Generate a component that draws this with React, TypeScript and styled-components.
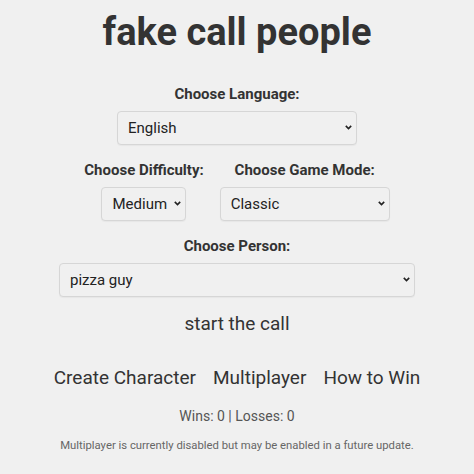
import React, { useState } from "react"
import styled, { createGlobalStyle } from "styled-components"

const GlobalStyle = createGlobalStyle`
  html, body {
    margin: 0;
    padding: 0;
    background: #f0f0f0;
    font-family: Roboto, "Liberation Sans", sans-serif;
    color: #333;
  }
`

const Page = styled.div`
  display: flex;
  flex-direction: column;
  align-items: center;
  min-height: 474px;
  box-sizing: border-box;
`

const Title = styled.h1`
  margin: 10px 0 0;
  font-size: 38px;
  line-height: 44px;
  font-weight: 700;
  color: #333;
`

const Form = styled.div`
  display: flex;
  flex-direction: column;
  align-items: center;
  gap: 16px;
  margin-top: 31px;
`

const FieldRow = styled.div`
  display: flex;
  gap: 16px;
  align-items: flex-start;
`

const Field = styled.div`
  display: flex;
  flex-direction: column;
  align-items: center;
  gap: 8px;
`

const Label = styled.label`
  font-size: 15px;
  line-height: 18px;
  font-weight: 700;
  color: #333;
`

const SelectBox = styled.div<{ $width: number }>`
  position: relative;
  width: ${({ $width }) => $width}px;
  height: 34px;
`

const Select = styled.select`
  appearance: none;
  width: 100%;
  height: 100%;
  padding: 0 14px 0 10px;
  font-family: Roboto, "Liberation Sans", sans-serif;
  font-size: 15px;
  color: #222;
  background: #f0f0f0;
  border: 1px solid #d6d6d6;
  border-radius: 4px;
  box-shadow: 0 1px 1px rgba(0, 0, 0, 0.04);
  cursor: pointer;
`

const Chevron = styled.svg`
  position: absolute;
  right: 5px;
  top: 14px;
  width: 7px;
  height: 5px;
  pointer-events: none;
`

function Dropdown({
  id,
  width,
  value,
  onChange,
  options,
}: {
  id: string
  width: number
  value: string
  onChange: (v: string) => void
  options: [string, string][]
}) {
  return (
    <SelectBox $width={width}>
      <Select id={id} value={value} onChange={e => onChange(e.target.value)}>
        {options.map(([v, label]) => (
          <option key={v} value={v}>
            {label}
          </option>
        ))}
      </Select>
      <Chevron viewBox="0 0 7 5">
        <path d="M0.8 0.9 L3.5 3.6 L6.2 0.9" fill="none" stroke="#222" strokeWidth="1.6" />
      </Chevron>
    </SelectBox>
  )
}

const StartButton = styled.button`
  margin-top: 15px;
  padding: 0;
  border: none;
  background: none;
  font-family: Roboto, "Liberation Sans", sans-serif;
  font-size: 19px;
  line-height: 24px;
  color: #333;
  cursor: pointer;
`

const NavRow = styled.nav`
  display: flex;
  gap: 17px;
  margin-top: 30px;
`

const NavButton = styled.button`
  padding: 0;
  border: none;
  background: none;
  font-family: Roboto, "Liberation Sans", sans-serif;
  font-size: 19px;
  line-height: 24px;
  color: #333;
  cursor: pointer;
`

const Score = styled.p`
  margin: 17px 0 0;
  font-size: 14px;
  line-height: 18px;
  color: #555;
`

const Notice = styled.p`
  margin: 13px 0 0;
  font-size: 11.3px;
  line-height: 16px;
  color: #666;
`

export default function App() {
  const [language, setLanguage] = useState("en")
  const [difficulty, setDifficulty] = useState("medium")
  const [mode, setMode] = useState("classic")
  const [person, setPerson] = useState("pizza")
  const stats = { wins: 0, losses: 0 }

  return (
    <Page>
      <GlobalStyle />
      <Title>fake call people</Title>
      <Form>
        <Field>
          <Label htmlFor="language">Choose Language:</Label>
          <Dropdown
            id="language"
            width={240}
            value={language}
            onChange={setLanguage}
            options={[
              ["en", "English"],
              ["es", "Español"],
              ["fr", "Français"],
            ]}
          />
        </Field>
        <FieldRow>
          <Field>
            <Label htmlFor="difficulty">Choose Difficulty:</Label>
            <Dropdown
              id="difficulty"
              width={85}
              value={difficulty}
              onChange={setDifficulty}
              options={[
                ["easy", "Easy"],
                ["medium", "Medium"],
                ["hard", "Hard"],
              ]}
            />
          </Field>
          <Field>
            <Label htmlFor="mode">Choose Game Mode:</Label>
            <Dropdown
              id="mode"
              width={170}
              value={mode}
              onChange={setMode}
              options={[
                ["classic", "Classic"],
                ["timed", "Timed"],
              ]}
            />
          </Field>
        </FieldRow>
        <Field>
          <Label htmlFor="person">Choose Person:</Label>
          <Dropdown
            id="person"
            width={356}
            value={person}
            onChange={setPerson}
            options={[
              ["pizza", "pizza guy"],
              ["mom", "mom"],
              ["boss", "boss"],
            ]}
          />
        </Field>
      </Form>
      <StartButton>start the call</StartButton>
      <NavRow>
        <NavButton>Create Character</NavButton>
        <NavButton>Multiplayer</NavButton>
        <NavButton>How to Win</NavButton>
      </NavRow>
      <Score>
        Wins: {stats.wins} | Losses: {stats.losses}
      </Score>
      <Notice>Multiplayer is currently disabled but may be enabled in a future update.</Notice>
    </Page>
  )
}
